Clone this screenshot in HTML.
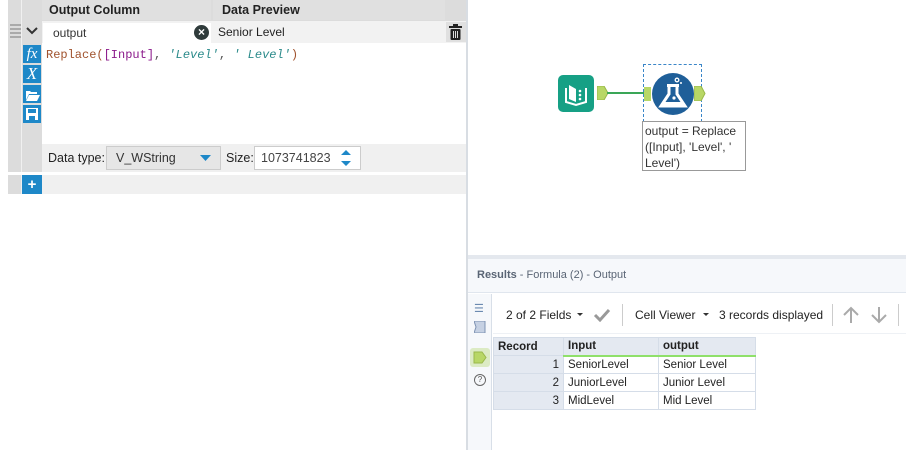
<!DOCTYPE html>
<html><head><style>
*{margin:0;padding:0;box-sizing:border-box}
body{width:906px;height:450px;overflow:hidden;background:#fff;font-family:"Liberation Sans",sans-serif;font-size:12px;color:#222;position:relative}
.a{position:absolute}
.ic{position:absolute;left:23px;width:18px;height:18px;background:#1e88c8;color:#fff;text-align:center;font-family:"Liberation Serif",serif;font-style:italic;font-size:15px;line-height:18px}
td{border:1px solid #d5dde8;height:18px;padding:0 4px;font-size:11.5px}
</style></head><body>
<div class="a" style="left:0;top:0;width:8px;height:450px;background:#fff"></div>
<div class="a" style="left:8px;top:0;width:458px;height:194px;background:#dcdcdc"></div>
<div class="a" style="left:21px;top:0;width:1px;height:194px;background:#f0f0f0"></div>
<div class="a" style="left:42px;top:0;width:169px;height:20px;background:#e0e0e0;font-weight:bold;font-size:12.5px;padding:3px 7px">Output Column</div>
<div class="a" style="left:213px;top:0;width:232px;height:20px;background:#e0e0e0;font-weight:bold;font-size:12.5px;padding:3px 9px">Data Preview</div>
<div class="a" style="left:42px;top:21px;width:424px;height:22px;background:#f2f2f2"></div>
<div class="a" style="left:43px;top:23px;width:168px;height:20px;background:#fff;padding:3px 10px;color:#333">output</div>
<div class="a" style="left:194px;top:25px;width:15px;height:15px;border-radius:50%;background:#2f3b3b;color:#fff;font-size:12px;line-height:15px;text-align:center;font-weight:bold">×</div>
<div class="a" style="left:218px;top:25px;color:#222">Senior Level</div>
<div class="a" style="left:446px;top:22px;width:20px;height:20px;background:#e0e0e0"></div>
<svg class="a" style="left:449px;top:24px" width="13" height="16"><rect x="0" y="2" width="13" height="2" fill="#222"/><rect x="4" y="0" width="5" height="2" fill="#222"/><rect x="1.5" y="5" width="10" height="11" rx="1" fill="#222"/><rect x="4" y="7" width="1" height="7" fill="#ddd"/><rect x="6" y="7" width="1" height="7" fill="#ddd"/><rect x="8" y="7" width="1" height="7" fill="#ddd"/></svg>
<div class="a" style="left:10px;top:24px;width:11px;height:2px;background:#aaa;box-shadow:0 4px 0 #aaa,0 8px 0 #aaa,0 12px 0 #aaa"></div>
<svg class="a" style="left:26px;top:27px" width="12" height="8"><path d="M1 1l5 5 5-5" stroke="#333" stroke-width="2" fill="none"/></svg>
<div class="a" style="left:42px;top:43px;width:424px;height:101px;background:#fff"></div>
<div class="a" style="left:46px;top:48px;font-family:'Liberation Mono',monospace;font-size:12px;color:#a0522d">Replace(<span style="color:#8b1a8b">[Input]</span><span style="color:#555">,</span> <i style="color:#2a8a8a">'Level'</i><span style="color:#555">,</span> <i style="color:#2a8a8a">' Level'</i>)</div>
<div class="ic" style="top:45px">fx</div>
<div class="ic" style="top:65px;font-size:17px">X</div>
<div class="ic" style="top:85px"><svg width="18" height="18"><path d="M3 6h4l1 1h6v2H6l-3 6z M6 10h11l-3 6H3z" fill="#fff"/></svg></div>
<div class="ic" style="top:105px"><svg width="18" height="18"><rect x="3" y="3" width="12" height="12" fill="#fff"/><rect x="5" y="4" width="8" height="4" fill="#1e88c8"/><rect x="6" y="11" width="6" height="4" fill="#1e88c8"/></svg></div>
<div class="a" style="left:42px;top:144px;width:424px;height:28px;background:#f0f0f0"></div>
<div class="a" style="left:48px;top:151px;font-size:12.5px">Data type:</div>
<div class="a" style="left:106px;top:146px;width:115px;height:24px;background:#e6e6e6;border:1px solid #ccc;padding:4px 9px;font-size:12.5px;color:#333">V_WString</div>
<svg class="a" style="left:200px;top:155px" width="11" height="7"><path d="M0 0h11L5.5 6z" fill="#1e88c8"/></svg>
<div class="a" style="left:226px;top:151px;font-size:12.5px">Size:</div>
<div class="a" style="left:254px;top:146px;width:107px;height:24px;background:#fff;border:1px solid #ccc;padding:4px 6px;font-size:12.5px;color:#444">1073741823</div>
<svg class="a" style="left:339px;top:149px" width="14" height="18"><path d="M2 6l5-5 5 5z M2 12l5 5 5-5z" fill="#1e88c8"/></svg>
<div class="a" style="left:8px;top:172px;width:458px;height:3px;background:#fff"></div>
<div class="a" style="left:22px;top:175px;width:444px;height:19px;background:#f0f0f0"></div>
<div class="a" style="left:22px;top:175px;width:20px;height:19px;background:#1e88c8;color:#fff;font-weight:bold;font-size:15px;text-align:center;line-height:19px">+</div>
<div class="a" style="left:466px;top:0;width:2px;height:450px;background:#d8dde3"></div>
<div class="a" style="left:468px;top:255px;width:438px;height:4px;background:#e4e8ee"></div>
<div class="a" style="left:558px;top:75px;width:36px;height:37px;border-radius:5px;background:#16a085"></div>
<svg class="a" style="left:562px;top:80px" width="28" height="28"><path d="M4 8v14l10 3 10-3V8" stroke="#fff" stroke-width="2" fill="none"/><path d="M7 5l7 4v13l-7-3z" fill="#fff"/><circle cx="18" cy="11" r="1.3" fill="#fff"/><circle cx="18" cy="15" r="1.3" fill="#fff"/><circle cx="18" cy="19" r="1.3" fill="#fff"/></svg>
<svg class="a" style="left:597px;top:86px" width="12" height="14"><path d="M0 0h7l4 7-4 7H0z" fill="#b8d766" stroke="#9ab84a"/></svg>
<div class="a" style="left:607px;top:92px;width:38px;height:2px;background:#3aa657"></div>
<div class="a" style="left:643px;top:64px;width:59px;height:58px;border:1px dashed #3a86c8"></div>
<svg class="a" style="left:644px;top:87px" width="8" height="14"><path d="M0 0h7v14H0z" fill="#b8d766"/></svg>
<div class="a" style="left:652px;top:73px;width:42px;height:42px;border-radius:50%;background:#1f5f99"></div>
<svg class="a" style="left:652px;top:73px" width="42" height="42"><path d="M17 13v8l-8 12h24l-8-12v-8" stroke="#fff" stroke-width="3" fill="none"/><path d="M11 29h20l2 4H9z" fill="#fff"/><rect x="15" y="11" width="12" height="3" fill="#fff"/><circle cx="25" cy="7" r="1.8" fill="none" stroke="#fff" stroke-width="1.3"/><circle cx="29" cy="10" r="1" fill="#fff"/><circle cx="22" cy="25" r="1.6" fill="#fff"/></svg>
<svg class="a" style="left:694px;top:86px" width="12" height="15"><path d="M0 0h7l4 7.5-4 7.5H0z" fill="#b8d766" stroke="#9ab84a"/></svg>
<div class="a" style="left:642px;top:121px;width:104px;height:50px;border:1px solid #999;background:#fff;padding:1px 2px;font-size:12px;line-height:16px;color:#333">output = Replace ([Input], 'Level', ' Level')</div>
<div class="a" style="left:468px;top:259px;width:438px;height:34px;background:#f6f8fb;border-bottom:1px solid #e0e6ee"></div>
<div class="a" style="left:477px;top:269px;font-size:11px;color:#5a6575"><b>Results</b> - Formula (2) - Output</div>
<div class="a" style="left:468px;top:294px;width:24px;height:156px;background:#f6f8fb;border-right:1px solid #d8dfe8"></div>
<div class="a" style="left:474px;top:302px;font-size:11px;color:#6b8ab0">☰</div>
<svg class="a" style="left:474px;top:321px" width="12" height="12"><path d="M0 0h11v12H0l2-6z" fill="#c6d1e3" stroke="#7f93b3"/></svg>
<div class="a" style="left:470px;top:348px;width:20px;height:19px;background:#dcebc4;border-radius:3px"></div>
<svg class="a" style="left:473px;top:351px" width="14" height="13"><path d="M1 1h8l4 5.5-4 5.5H1z" fill="#b8d766" stroke="#9ab84a"/></svg>
<div class="a" style="left:474px;top:374px;width:12px;height:12px;border:1px solid #666;border-radius:50%;font-size:8px;text-align:center;line-height:10px;color:#555">?</div>
<div class="a" style="left:506px;top:308px;font-size:12px">2 of 2 Fields</div>
<svg class="a" style="left:577px;top:313px" width="6" height="4"><path d="M0 0h6L3 3z" fill="#333"/></svg>
<svg class="a" style="left:593px;top:308px" width="18" height="14"><path d="M2 7l5 5 9-10" stroke="#999" stroke-width="3" fill="none"/></svg>
<div class="a" style="left:622px;top:304px;width:1px;height:22px;background:#ccc"></div>
<div class="a" style="left:635px;top:308px;font-size:12px">Cell Viewer</div>
<svg class="a" style="left:703px;top:313px" width="6" height="4"><path d="M0 0h6L3 3z" fill="#333"/></svg>
<div class="a" style="left:719px;top:308px;font-size:12px">3 records displayed</div>
<div class="a" style="left:832px;top:304px;width:1px;height:22px;background:#ccc"></div>
<svg class="a" style="left:842px;top:306px" width="50" height="18"><path d="M9 17V2M2 9l7-7 7 7M37 1v15M30 9l7 7 7-7" stroke="#aaa" stroke-width="2" fill="none"/></svg>
<div class="a" style="left:898px;top:304px;width:1px;height:22px;background:#ccc"></div>
<div class="a" style="left:493px;top:333px;width:413px;height:1px;background:#eef1f5"></div>
<table class="a" style="left:493px;top:337px;border-collapse:collapse">
<tr style="background:#e4e9f1;font-weight:bold"><td style="width:70px;font-weight:bold">Record</td><td style="width:95px;font-weight:bold;border-bottom:2px solid #8fe06a">Input</td><td style="width:97px;font-weight:bold;border-bottom:2px solid #8fe06a">output</td></tr>
<tr><td style="background:#e4e9f1;text-align:right">1</td><td>SeniorLevel</td><td>Senior Level</td></tr>
<tr><td style="background:#e4e9f1;text-align:right">2</td><td>JuniorLevel</td><td>Junior Level</td></tr>
<tr><td style="background:#e4e9f1;text-align:right">3</td><td>MidLevel</td><td>Mid Level</td></tr>
</table>
</body></html>
